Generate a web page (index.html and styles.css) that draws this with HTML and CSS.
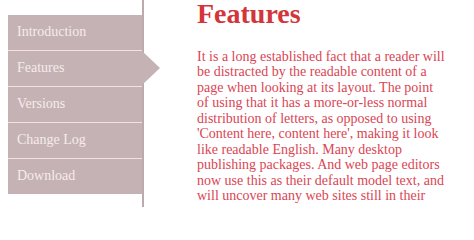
FILE: index.html
```html
<!DOCTYPE html>
<html lang="en">
<head>
<meta charset="utf-8">
<title>Features</title>
<link rel="stylesheet" href="styles.css">
</head>
<body>
<div class="page">
  <nav class="sidebar">
    <ul class="menu">
      <li class="menu-item"><a href="#">Introduction</a></li>
      <li class="menu-item active"><a href="#">Features</a><span class="arrow"></span></li>
      <li class="menu-item"><a href="#">Versions</a></li>
      <li class="menu-item"><a href="#">Change Log</a></li>
      <li class="menu-item"><a href="#">Download</a></li>
    </ul>
  </nav>
  <main class="content">
    <h1 class="title">Features</h1>
    <p class="text">It is a long established fact that a reader will be distracted by the readable content of a page when looking at its layout. The point of using that it has a more-or-less normal distribution of letters, as opposed to using 'Content here, content here', making it look like readable English. Many desktop publishing packages. And web page editors now use this as their default model text, and will uncover many web sites still in their</p>
  </main>
</div>
</body>
</html>
```
FILE: styles.css
```css
html, body {
  margin: 0;
  padding: 0;
  background: #ffffff;
}

body {
  font-family: "Liberation Serif", "Times New Roman", serif;
  overflow: hidden;
}

.page {
  display: flex;
  align-items: stretch;
  height: 207px;
  overflow: hidden;
}

.sidebar {
  margin-left: 8px;
  width: 134px;
  padding-top: 15px;
  border-right: 2px solid #bcaaac;
  flex-shrink: 0;
}

.menu {
  list-style: none;
  margin: 0;
  padding: 0;
}

.menu-item {
  position: relative;
  background: #c5b2b4;
  border-bottom: 1px solid #f6e0e0;
}

.menu-item:last-child {
  border-bottom: none;
}

.menu-item a {
  display: block;
  height: 35px;
  box-sizing: border-box;
  padding: 9px 0 0 9px;
  font-size: 14px;
  line-height: 16px;
  color: #f6ecec;
  text-decoration: none;
}

.arrow {
  position: absolute;
  left: 134px;
  top: 0;
  width: 0;
  height: 0;
  border-top: 17.5px solid transparent;
  border-bottom: 17.5px solid transparent;
  border-left: 18px solid #c5b2b4;
}

.content {
  margin-left: 53px;
  width: 250px;
}

.title {
  margin: 0;
  font-size: 28px;
  line-height: 28px;
  font-weight: bold;
  color: #d3353a;
}

.text {
  margin: 20.5px 0 0 0;
  font-size: 14px;
  line-height: 15.5px;
  color: #da4553;
}
```
